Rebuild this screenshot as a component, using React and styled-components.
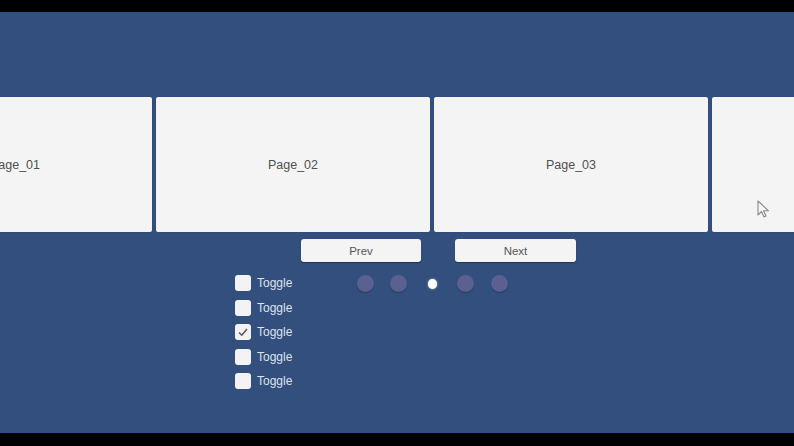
import React from "react";
import styled, { createGlobalStyle } from "styled-components";

const Global = createGlobalStyle`
  html, body { margin: 0; padding: 0; background: #000; }
  body { width: 794px; height: 446px; overflow: hidden; font-family: "Liberation Sans", Arial, sans-serif; }
`;

const Frame = styled.div`
  width: 794px;
  height: 446px;
  background: #000;
  padding: 12px 0 13px;
  box-sizing: border-box;
`;

const Stage = styled.div`
  position: relative;
  height: 100%;
  background: #324f7e;
  overflow: hidden;
  padding-top: 85px;
  box-sizing: border-box;
`;

const Track = styled.div`
  display: flex;
  gap: 4px;
  margin-left: -122px;
  width: max-content;
`;

const Page = styled.div`
  width: 274px;
  height: 135px;
  flex: none;
  background: #f4f4f4;
  border-radius: 2px;
  display: flex;
  align-items: center;
  justify-content: center;
  color: #505050;
  font-size: 12.5px;
  box-shadow: 0 0 1px rgba(0,0,0,0.3);
`;

const ButtonRow = styled.div`
  display: flex;
  gap: 34px;
  margin: 7px 0 0 301px;
`;

const NavButton = styled.div`
  width: ${(p) => p.$w}px;
  height: 23px;
  background: #f4f4f4;
  border-radius: 3px;
  box-shadow: 0 1px 1px rgba(0,0,0,0.35);
  display: flex;
  align-items: center;
  justify-content: center;
  color: #555;
  font-size: 11.5px;
`;

const Lower = styled.div`
  display: flex;
  align-items: flex-start;
  margin: 12px 0 0 235px;
`;

const ToggleList = styled.div`
  display: flex;
  flex-direction: column;
  gap: 8.5px;
  width: 121.5px;
  margin-top: 1px;
`;

const ToggleRow = styled.div`
  display: flex;
  align-items: center;
  gap: 6px;
  height: 16px;
`;

const Box = styled.div`
  width: 16px;
  height: 16px;
  border-radius: 3px;
  background: #f3f3f3;
  display: flex;
  align-items: center;
  justify-content: center;
`;

const ToggleLabel = styled.span`
  color: #dfe3ea;
  font-size: 12px;
  line-height: 16px;
`;

const Dots = styled.div`
  display: flex;
  gap: 16.5px;
  margin-top: 1px;
`;

const Dot = styled.div`
  width: 17px;
  height: 17px;
  border-radius: 50%;
  display: flex;
  align-items: center;
  justify-content: center;
  background: ${(p) => (p.$active ? "transparent" : "#5a6190")};
  box-shadow: ${(p) => (p.$active ? "none" : "0 1px 1px rgba(20,30,60,0.4)")};
  &::after {
    content: "";
    display: ${(p) => (p.$active ? "block" : "none")};
    width: 9px;
    height: 10px;
    border-radius: 50%;
    background: #fbfbfb;
    box-shadow: 0 0 2px rgba(255,255,255,0.8);
  }
`;

const Cursor = styled.svg`
  position: absolute;
  left: 757px;
  top: 188px;
`;

const pages = ["Page_01", "Page_02", "Page_03", ""];

export default function App() {
  return (
    <>
      <Global />
      <Frame>
        <Stage>
          <Track>
            {pages.map((p, i) => (
              <Page key={i}>{p}</Page>
            ))}
          </Track>
          <ButtonRow>
            <NavButton $w={120}>Prev</NavButton>
            <NavButton $w={121}>Next</NavButton>
          </ButtonRow>
          <Lower>
            <ToggleList>
              {[false, false, true, false, false].map((c, i) => (
                <ToggleRow key={i}>
                  <Box>
                    {c && (
                      <svg width="12" height="12" viewBox="0 0 12 12">
                        <path d="M2 6.5 L4.8 9.2 L10 3" fill="none" stroke="#555" strokeWidth="1.5" />
                      </svg>
                    )}
                  </Box>
                  <ToggleLabel>Toggle</ToggleLabel>
                </ToggleRow>
              ))}
            </ToggleList>
            <Dots>
              {[0, 1, 2, 3, 4].map((i) => (
                <Dot key={i} $active={i === 2} />
              ))}
            </Dots>
          </Lower>
          <Cursor width="14" height="19" viewBox="0 0 14 19">
            <path d="M1 1 L1 15 L4.5 11.5 L7 17 L9 16 L6.5 10.8 L11.5 10.8 Z" fill="#f6f6f6" stroke="#8a8a8a" strokeWidth="1.1" strokeLinejoin="round" />
          </Cursor>
        </Stage>
      </Frame>
    </>
  );
}
